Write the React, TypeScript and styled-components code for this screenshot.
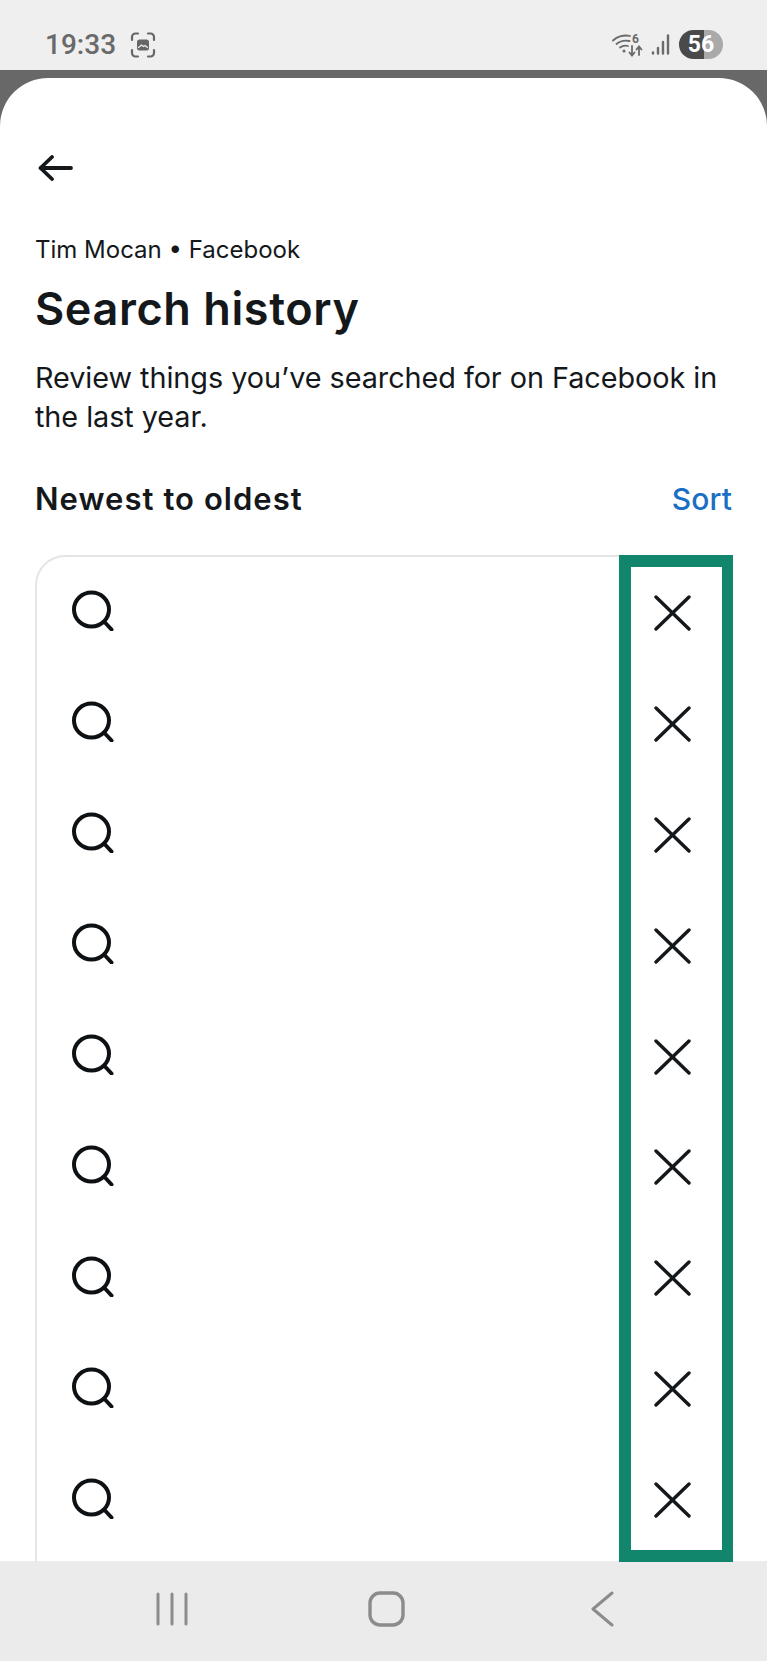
import React from "react";
import styled, { createGlobalStyle } from "styled-components";

const GlobalStyle = createGlobalStyle`
  html, body {
    margin: 0;
    padding: 0;
    background: #ebebeb;
  }
  * {
    box-sizing: border-box;
  }
`;

const Page = styled.div`
  position: relative;
  width: 767px;
  height: 1661px;
  display: flex;
  flex-direction: column;
  overflow: hidden;
  background: #686868;
  font-family: Inter, "Noto Sans", "Liberation Sans", sans-serif;
  color: #14181b;
`;

const StatusBar = styled.div`
  height: 70px;
  flex: none;
  display: flex;
  align-items: center;
  justify-content: space-between;
  padding: 19px 44px 0 45px;
  background: #efefef;
  color: #6a6a6a;
`;

const StatusGroup = styled.div`
  display: flex;
  align-items: center;
`;

const Clock = styled.span`
  font-family: Roboto, "Liberation Sans", sans-serif;
  font-size: 28px;
  line-height: 34px;
  font-weight: 500;
  margin-right: 14px;
`;

const Battery = styled.div`
  width: 44px;
  height: 29px;
  margin-left: 9px;
  border-radius: 15px;
  background: linear-gradient(90deg, #4a4a4a 0 57%, #a9a9a9 57% 100%);
  color: #fff;
  display: flex;
  align-items: center;
  justify-content: center;
  font-family: Roboto, "Liberation Sans", sans-serif;
  font-size: 23px;
  font-weight: 700;
`;

const Sheet = styled.main`
  flex: 1;
  margin-top: 8px;
  min-height: 0;
  overflow: hidden;
  padding: 77px 35px 0;
  background: #fff;
  border-radius: 48px 48px 0 0;
`;

const BackButton = styled.div`
  height: 25px;
  margin-left: 3px;
  display: flex;
`;

const Account = styled.div`
  margin-top: 55px;
  font-size: 24px;
  line-height: 30px;
`;

const Title = styled.h1`
  margin: 17px 0 0;
  font-size: 45px;
  line-height: 54px;
  font-weight: 600;
  letter-spacing: 0.6px;
`;

const Description = styled.p`
  margin: 23px 0 0;
  font-size: 28.8px;
  line-height: 38.5px;
  letter-spacing: -0.05px;
`;

const SortRow = styled.div`
  margin-top: 44px;
  display: flex;
  align-items: center;
  justify-content: space-between;
  font-size: 31px;
  line-height: 38px;
  font-weight: 600;
  letter-spacing: 1.05px;
`;

const SortLink = styled.span`
  color: #1a6fc4;
  font-size: 30px;
  font-weight: 500;
  letter-spacing: 0.1px;
`;

const HistoryCard = styled.div`
  margin-top: 37px;
  border: 2px solid #e5e5e5;
  border-bottom: 0;
  border-radius: 30px 30px 0 0;
`;

const HistoryRow = styled.div`
  height: 110.9px;
  padding: 0 39px 3px 34px;
  display: flex;
  align-items: center;
  justify-content: space-between;
`;

const CloseSlot = styled.div`
  display: flex;
  padding-top: 4px;
`;

const Highlight = styled.div`
  position: absolute;
  left: 619px;
  top: 555px;
  width: 114px;
  height: 1007px;
  border: 12px solid #11866c;
  border-right-width: 11px;
`;

const NavBar = styled.nav`
  height: 100px;
  flex: none;
  padding-bottom: 4px;
  display: flex;
  align-items: center;
  background: #ebebeb;
`;

const NavSlot = styled.div<{ $left: number }>`
  margin-left: ${(p) => p.$left}px;
  display: flex;
`;

const ScreenshotIcon = () => (
  <svg width="26" height="26" viewBox="0 0 26 26" fill="none" stroke="#666" strokeWidth="2.2" strokeLinecap="round">
    <path d="M2 8V5a3.5 3.5 0 0 1 3.5-3.5H8" />
    <path d="M18 1.5h2.5A3.5 3.5 0 0 1 24 5v3" />
    <path d="M24 18v3a3.5 3.5 0 0 1-3.5 3.5H18" />
    <path d="M8 24.5H5.5A3.5 3.5 0 0 1 2 21v-3" />
    <rect x="7" y="7.5" width="12" height="11" rx="2.5" fill="#666" stroke="none" />
    <path d="M8.5 15.5l3-2.5 2 1.5 1.5-1 2.5 2" stroke="#efefef" strokeWidth="1.2" />
  </svg>
);

const WifiIcon = () => (
  <svg width="31" height="24" viewBox="0 0 31 24" fill="none" stroke="#6a6a6a" strokeLinecap="round">
    <g strokeWidth="1.8">
      <path d="M1 7.5C5 3.5 12 1.5 18 3" />
      <path d="M4.5 11C8 8 13 7 17.5 8" />
      <path d="M8 14.5c2.5-2 5.5-2.300 8-1.500" />
    </g>
    <circle cx="12" cy="18" r="1.5" fill="#6a6a6a" stroke="none" />
    <text x="20" y="10" fontSize="12" fontWeight="700" fill="#6a6a6a" stroke="none" fontFamily="Roboto, sans-serif">6</text>
    <g strokeWidth="1.8">
      <path d="M20 13v9M17.5 19.5l2.5 3 2.5-3" />
      <path d="M27 22v-8M24.5 16.5l2.5-3 2.5 3" />
    </g>
  </svg>
);

const SignalIcon = () => (
  <svg width="19" height="21" viewBox="0 0 19 21" fill="none" stroke="#6a6a6a" strokeWidth="2.4" strokeLinecap="round" style={{ marginLeft: 8 }}>
    <path d="M2 18.5v1" />
    <path d="M7 14v5.5" />
    <path d="M12 8v11.5" />
    <path d="M17 1.5v18" />
  </svg>
);

const ArrowIcon = () => (
  <svg width="35" height="26" viewBox="0 0 35 26" fill="none" stroke="#14181b" strokeWidth="3.8" strokeLinecap="round" strokeLinejoin="round">
    <path d="M33 13H3" />
    <path d="M14 2 2.5 13 14 24" />
  </svg>
);

const SearchIcon = () => (
  <svg width="43" height="41" viewBox="0 0 43 41" fill="none" stroke="#0d1114" strokeWidth="4" strokeLinecap="round">
    <ellipse cx="20.5" cy="19.5" rx="17.5" ry="17" />
    <path d="M33.5 32l7 7.500" />
  </svg>
);

const CloseIcon = () => (
  <svg width="37" height="36" viewBox="0 0 37 36" fill="none" stroke="#14181b" strokeWidth="3.4" strokeLinecap="round">
    <path d="M2 2l33 32" />
    <path d="M35 2 2 34" />
  </svg>
);

const MenuIcon = () => (
  <svg width="32" height="34" viewBox="0 0 32 34" fill="none" stroke="#8c8c8c" strokeWidth="3" strokeLinecap="round">
    <path d="M2 2v30" />
    <path d="M16 2v30" />
    <path d="M30 2v30" />
  </svg>
);

const HomeIcon = () => (
  <svg width="37" height="36" viewBox="0 0 37 36" fill="none" stroke="#8c8c8c" strokeWidth="3.4">
    <rect x="2" y="2" width="33" height="32" rx="10" />
  </svg>
);

const BackIcon = () => (
  <svg width="23" height="36" viewBox="0 0 23 36" fill="none" stroke="#8c8c8c" strokeWidth="3" strokeLinecap="round" strokeLinejoin="round">
    <path d="M21 2 2 18l19 16" />
  </svg>
);

const rows = Array.from({ length: 10 }, (_, i) => i);

export default function App() {
  return (
    <Page>
      <GlobalStyle />
      <StatusBar>
        <StatusGroup>
          <Clock>19:33</Clock>
          <ScreenshotIcon />
        </StatusGroup>
        <StatusGroup>
          <WifiIcon />
          <SignalIcon />
          <Battery>56</Battery>
        </StatusGroup>
      </StatusBar>
      <Sheet>
        <BackButton>
          <ArrowIcon />
        </BackButton>
        <Account>Tim Mocan • Facebook</Account>
        <Title>Search history</Title>
        <Description>
          Review things you’ve searched for on Facebook in the last year.
        </Description>
        <SortRow>
          <span>Newest to oldest</span>
          <SortLink>Sort</SortLink>
        </SortRow>
        <HistoryCard>
          {rows.map((row) => (
            <HistoryRow key={row}>
              <SearchIcon />
              <CloseSlot>
                <CloseIcon />
              </CloseSlot>
            </HistoryRow>
          ))}
        </HistoryCard>
      </Sheet>
      <NavBar>
        <NavSlot $left={156}>
          <MenuIcon />
        </NavSlot>
        <NavSlot $left={180}>
          <HomeIcon />
        </NavSlot>
        <NavSlot $left={186}>
          <BackIcon />
        </NavSlot>
      </NavBar>
      <Highlight />
    </Page>
  );
}
